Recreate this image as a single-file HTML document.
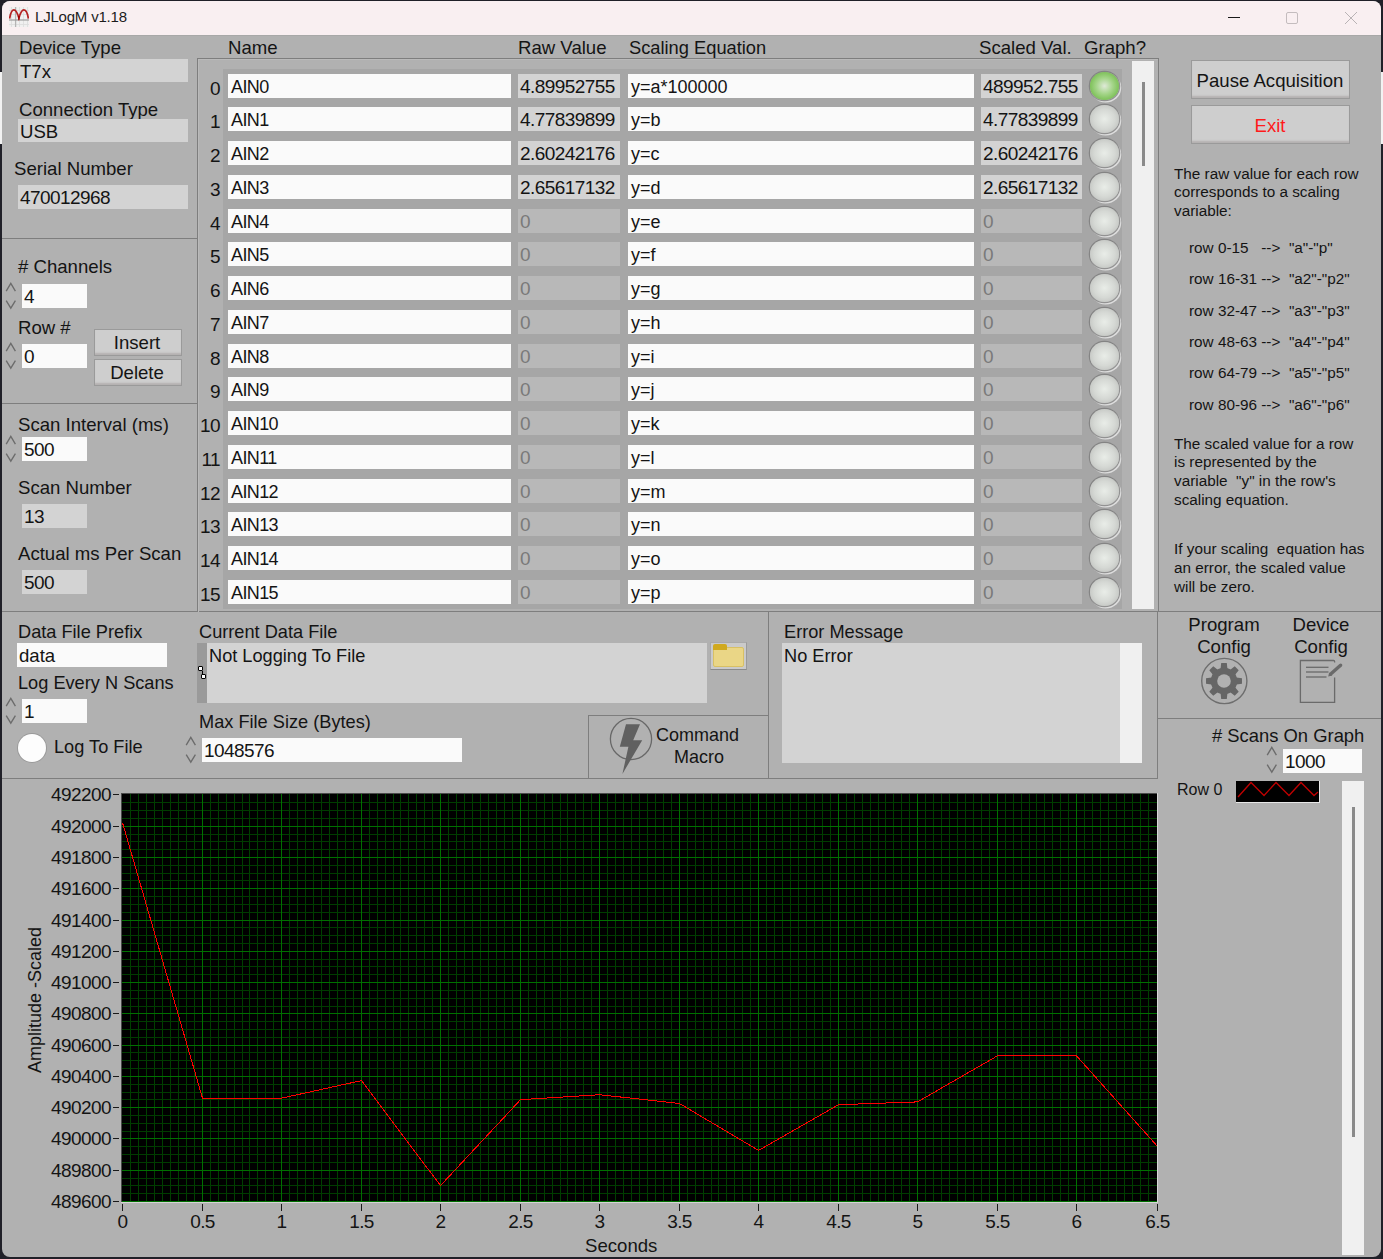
<!DOCTYPE html>
<html><head><meta charset="utf-8"><style>
html,body{margin:0;padding:0;width:1383px;height:1259px;overflow:hidden;background:#202028}
.a{position:absolute;box-sizing:content-box}
.t{position:absolute;white-space:pre;font-family:"Liberation Sans",sans-serif;color:#141414}
.btn{background:#cecece;border:1px solid #9a9a9a;box-shadow:inset 0 -3px 2px -1px #b4b0b0}
.led{border-radius:50%;box-shadow:0 0 0.5px 1.2px rgba(120,120,120,0.75), 1.2px 1.5px 0.5px 1px rgba(235,235,235,0.8)}
</style></head><body>
<div class="a" style="left:0px;top:72px;width:2px;height:72px;background:#f2f2f2;"></div>
<div class="a" style="left:1381px;top:72px;width:2px;height:72px;background:#f2f2f2;"></div>
<div class="a" style="left:2px;top:1px;width:1379px;height:1256px;background:#b1b1b1;border-radius:8px;overflow:hidden">
</div>
<div class="a" style="left:2px;top:1px;width:1379px;height:34px;background:#f9eff1;border-radius:8px 8px 0 0"></div>
<svg class="a" style="left:9px;top:7px" width="20" height="20" viewBox="0 0 20 20">
<rect x="0" y="0" width="20" height="20" fill="#f0f0f0"/>
<g stroke="#dcdcdc" stroke-width="0.8">
<line x1="2.5" y1="0" x2="2.5" y2="20"/><line x1="10.5" y1="0" x2="10.5" y2="20"/><line x1="14.5" y1="0" x2="14.5" y2="20"/><line x1="18.5" y1="0" x2="18.5" y2="20"/>
<line x1="0" y1="3.5" x2="20" y2="3.5"/><line x1="0" y1="7.5" x2="20" y2="7.5"/><line x1="0" y1="17.5" x2="20" y2="17.5"/></g>
<line x1="6.6" y1="0" x2="6.6" y2="20" stroke="#b4b4b4" stroke-width="1.3"/>
<line x1="0" y1="13" x2="20" y2="13" stroke="#9c9c9c" stroke-width="1.2"/>
<path d="M0.6,11.5 C1.5,6 3,2.8 4.9,2.8 C6.8,2.8 8.5,6 9.9,11 C11.3,6 13,2.8 14.8,2.8 C16.7,2.8 18.5,6 19.4,11.5" fill="none" stroke="#b52222" stroke-width="1.7"/>
<path d="M8.9,9 L10.9,9 L10.4,13 L9.4,13 Z" fill="#a00000"/>
</svg>
<div class="t" style="left:35px;top:9px;font-size:15px;line-height:15px;color:#1c1c1c;letter-spacing:-0.2px;">LJLogM v1.18</div>
<div class="a" style="left:1228px;top:17px;width:12px;height:1px;background:#1a1a1a;"></div>
<div class="a" style="left:1286px;top:12px;width:10px;height:10px;border:1px solid #c4bcbe;border-radius:2px"></div>
<svg class="a" style="left:1344px;top:11px" width="14" height="14" viewBox="0 0 14 14">
<line x1="1" y1="1" x2="13" y2="13" stroke="#b9b3b5" stroke-width="1"/><line x1="13" y1="1" x2="1" y2="13" stroke="#b9b3b5" stroke-width="1"/></svg>
<div class="a" style="left:2px;top:35px;width:1379px;height:1px;background:#a8a8a8;"></div>
<div class="t" style="left:19px;top:39px;font-size:18.6px;line-height:18.6px;">Device Type</div>
<div class="a" style="left:18px;top:59px;width:170px;height:23px;background:#d3d3d3;"></div>
<div class="t" style="left:20px;top:63px;font-size:18.6px;line-height:18.6px;">T7x</div>
<div class="t" style="left:19px;top:101px;font-size:18.6px;line-height:18.6px;">Connection Type</div>
<div class="a" style="left:18px;top:119px;width:170px;height:23px;background:#d3d3d3;"></div>
<div class="t" style="left:20px;top:123px;font-size:18.6px;line-height:18.6px;">USB</div>
<div class="t" style="left:14px;top:160px;font-size:18.6px;line-height:18.6px;">Serial Number</div>
<div class="a" style="left:18px;top:185px;width:170px;height:24px;background:#d3d3d3;"></div>
<div class="t" style="left:20px;top:188px;font-size:19px;line-height:19px;letter-spacing:-0.56px;">470012968</div>
<div class="a" style="left:2px;top:238px;width:195px;height:1px;background:#7e7e7e;"></div>
<div class="t" style="left:18px;top:258px;font-size:18.6px;line-height:18.6px;"># Channels</div>
<svg class="a" style="left:5px;top:282px" width="13" height="28" viewBox="0 -1 13 28"><polyline points="1.2,8.2 5.8,0.4 10.4,8.2" fill="none" stroke="#6c6c6c" stroke-width="1.35"/><polyline points="1.2,17.6 5.8,25.2 10.4,17.6" fill="none" stroke="#6c6c6c" stroke-width="1.35"/></svg>
<div class="a" style="left:22px;top:284px;width:65px;height:24px;background:#fafafa;"></div>
<div class="t" style="left:24px;top:287px;font-size:19px;line-height:19px;letter-spacing:-0.56px;">4</div>
<div class="t" style="left:18px;top:319px;font-size:18.6px;line-height:18.6px;">Row #</div>
<svg class="a" style="left:5px;top:341.5px" width="13" height="28" viewBox="0 -1 13 28"><polyline points="1.2,8.2 5.8,0.4 10.4,8.2" fill="none" stroke="#6c6c6c" stroke-width="1.35"/><polyline points="1.2,17.6 5.8,25.2 10.4,17.6" fill="none" stroke="#6c6c6c" stroke-width="1.35"/></svg>
<div class="a" style="left:22px;top:344px;width:65px;height:24px;background:#fafafa;"></div>
<div class="t" style="left:24px;top:347px;font-size:19px;line-height:19px;letter-spacing:-0.56px;">0</div>
<div class="a btn" style="left:94px;top:329px;width:86px;height:25px;"></div>
<div class="t" style="left:-63px;width:400px;text-align:center;top:334px;font-size:18.6px;line-height:18.6px;">Insert</div>
<div class="a btn" style="left:94px;top:359px;width:86px;height:25px;"></div>
<div class="t" style="left:-63px;width:400px;text-align:center;top:364px;font-size:18.6px;line-height:18.6px;">Delete</div>
<div class="a" style="left:2px;top:403px;width:195px;height:1px;background:#7e7e7e;"></div>
<div class="t" style="left:18px;top:416px;font-size:18.6px;line-height:18.6px;">Scan Interval (ms)</div>
<svg class="a" style="left:5px;top:435px" width="13" height="28" viewBox="0 -1 13 28"><polyline points="1.2,8.2 5.8,0.4 10.4,8.2" fill="none" stroke="#6c6c6c" stroke-width="1.35"/><polyline points="1.2,17.6 5.8,25.2 10.4,17.6" fill="none" stroke="#6c6c6c" stroke-width="1.35"/></svg>
<div class="a" style="left:22px;top:437px;width:65px;height:24px;background:#fafafa;"></div>
<div class="t" style="left:24px;top:440px;font-size:19px;line-height:19px;letter-spacing:-0.56px;">500</div>
<div class="t" style="left:18px;top:479px;font-size:18.6px;line-height:18.6px;">Scan Number</div>
<div class="a" style="left:22px;top:504px;width:65px;height:24px;background:#d3d3d3;"></div>
<div class="t" style="left:24px;top:507px;font-size:19px;line-height:19px;letter-spacing:-0.56px;">13</div>
<div class="t" style="left:18px;top:545px;font-size:18.6px;line-height:18.6px;">Actual ms Per Scan</div>
<div class="a" style="left:22px;top:570px;width:65px;height:24px;background:#d3d3d3;"></div>
<div class="t" style="left:24px;top:573px;font-size:19px;line-height:19px;letter-spacing:-0.56px;">500</div>
<div class="a" style="left:2px;top:611px;width:1379px;height:1px;background:#7e7e7e;"></div>
<div class="a" style="left:197px;top:58px;width:1px;height:553px;background:#7e7e7e;"></div>
<div class="t" style="left:228px;top:39px;font-size:18.6px;line-height:18.6px;">Name</div>
<div class="t" style="left:518px;top:39px;font-size:18.6px;line-height:18.6px;">Raw Value</div>
<div class="t" style="left:629px;top:39px;font-size:18.3px;line-height:18.3px;">Scaling Equation</div>
<div class="t" style="left:979px;top:39px;font-size:18.6px;line-height:18.6px;">Scaled Val.</div>
<div class="t" style="left:1084px;top:39px;font-size:18.6px;line-height:18.6px;">Graph?</div>
<div class="a" style="left:197px;top:58px;width:962px;height:1px;background:#7e7e7e;"></div>
<div class="a" style="left:1158px;top:58px;width:1px;height:554px;background:#7e7e7e;"></div>
<div class="a" style="left:198px;top:59px;width:960px;height:1px;background:#bababa;"></div>
<div class="a" style="left:198px;top:59px;width:1px;height:553px;background:#bababa;"></div>
<div class="a" style="left:223px;top:69px;width:899px;height:540px;background:#a6a6a6;"></div>
<div class="a" style="left:1132px;top:61px;width:22px;height:548px;background:#f0f0f0;"></div>
<div class="a" style="left:1142px;top:82px;width:3px;height:84px;background:#8a8a8a;"></div>
<div class="t" style="right:1163px;top:79px;font-size:19px;line-height:19px;letter-spacing:-0.4px;letter-spacing:-0.56px;">0</div>
<div class="a" style="left:228px;top:74px;width:283px;height:24px;background:#fafafa;"></div>
<div class="t" style="left:231px;top:78px;font-size:18px;line-height:18px;letter-spacing:-0.6px;">AIN0</div>
<div class="a" style="left:518px;top:74px;width:102px;height:24px;background:#d3d3d3;"></div>
<div class="t" style="left:520px;top:77px;font-size:19px;line-height:19px;letter-spacing:-0.56px;">4.89952755</div>
<div class="a" style="left:981px;top:74px;width:101px;height:24px;background:#d3d3d3;"></div>
<div class="t" style="left:983px;top:77px;font-size:19px;line-height:19px;letter-spacing:-0.56px;">489952.755</div>
<div class="a" style="left:628px;top:74px;width:346px;height:24px;background:#fafafa;"></div>
<div class="t" style="left:631px;top:78px;font-size:18px;line-height:18px;">y=a*100000</div>
<div class="a led" style="left:1089.5px;top:72.3px;width:29.5px;height:27.5px;background:radial-gradient(ellipse at 50% 50%, #dfe9d8 0%, #a5d58a 40%, #6cb843 85%, #62ad3a 100%)"></div>
<div class="t" style="right:1163px;top:112px;font-size:19px;line-height:19px;letter-spacing:-0.4px;letter-spacing:-0.56px;">1</div>
<div class="a" style="left:228px;top:107px;width:283px;height:24px;background:#fafafa;"></div>
<div class="t" style="left:231px;top:111px;font-size:18px;line-height:18px;letter-spacing:-0.6px;">AIN1</div>
<div class="a" style="left:518px;top:107px;width:102px;height:24px;background:#d3d3d3;"></div>
<div class="t" style="left:520px;top:110px;font-size:19px;line-height:19px;letter-spacing:-0.56px;">4.77839899</div>
<div class="a" style="left:981px;top:107px;width:101px;height:24px;background:#d3d3d3;"></div>
<div class="t" style="left:983px;top:110px;font-size:19px;line-height:19px;letter-spacing:-0.56px;">4.77839899</div>
<div class="a" style="left:628px;top:107px;width:346px;height:24px;background:#fafafa;"></div>
<div class="t" style="left:631px;top:111px;font-size:18px;line-height:18px;">y=b</div>
<div class="a led" style="left:1089.5px;top:105.3px;width:29.5px;height:27.5px;background:radial-gradient(ellipse at 50% 50%, #e9ede8 0%, #d5d8d4 50%, #bfc1be 85%, #aeb0ad 100%)"></div>
<div class="t" style="right:1163px;top:146px;font-size:19px;line-height:19px;letter-spacing:-0.4px;letter-spacing:-0.56px;">2</div>
<div class="a" style="left:228px;top:141px;width:283px;height:24px;background:#fafafa;"></div>
<div class="t" style="left:231px;top:145px;font-size:18px;line-height:18px;letter-spacing:-0.6px;">AIN2</div>
<div class="a" style="left:518px;top:141px;width:102px;height:24px;background:#d3d3d3;"></div>
<div class="t" style="left:520px;top:144px;font-size:19px;line-height:19px;letter-spacing:-0.56px;">2.60242176</div>
<div class="a" style="left:981px;top:141px;width:101px;height:24px;background:#d3d3d3;"></div>
<div class="t" style="left:983px;top:144px;font-size:19px;line-height:19px;letter-spacing:-0.56px;">2.60242176</div>
<div class="a" style="left:628px;top:141px;width:346px;height:24px;background:#fafafa;"></div>
<div class="t" style="left:631px;top:145px;font-size:18px;line-height:18px;">y=c</div>
<div class="a led" style="left:1089.5px;top:139.3px;width:29.5px;height:27.5px;background:radial-gradient(ellipse at 50% 50%, #e9ede8 0%, #d5d8d4 50%, #bfc1be 85%, #aeb0ad 100%)"></div>
<div class="t" style="right:1163px;top:180px;font-size:19px;line-height:19px;letter-spacing:-0.4px;letter-spacing:-0.56px;">3</div>
<div class="a" style="left:228px;top:175px;width:283px;height:24px;background:#fafafa;"></div>
<div class="t" style="left:231px;top:179px;font-size:18px;line-height:18px;letter-spacing:-0.6px;">AIN3</div>
<div class="a" style="left:518px;top:175px;width:102px;height:24px;background:#d3d3d3;"></div>
<div class="t" style="left:520px;top:178px;font-size:19px;line-height:19px;letter-spacing:-0.56px;">2.65617132</div>
<div class="a" style="left:981px;top:175px;width:101px;height:24px;background:#d3d3d3;"></div>
<div class="t" style="left:983px;top:178px;font-size:19px;line-height:19px;letter-spacing:-0.56px;">2.65617132</div>
<div class="a" style="left:628px;top:175px;width:346px;height:24px;background:#fafafa;"></div>
<div class="t" style="left:631px;top:179px;font-size:18px;line-height:18px;">y=d</div>
<div class="a led" style="left:1089.5px;top:173.3px;width:29.5px;height:27.5px;background:radial-gradient(ellipse at 50% 50%, #e9ede8 0%, #d5d8d4 50%, #bfc1be 85%, #aeb0ad 100%)"></div>
<div class="t" style="right:1163px;top:214px;font-size:19px;line-height:19px;letter-spacing:-0.4px;letter-spacing:-0.56px;">4</div>
<div class="a" style="left:228px;top:209px;width:283px;height:24px;background:#fafafa;"></div>
<div class="t" style="left:231px;top:213px;font-size:18px;line-height:18px;letter-spacing:-0.6px;">AIN4</div>
<div class="a" style="left:518px;top:209px;width:102px;height:24px;background:#b8b8b8;"></div>
<div class="t" style="left:520px;top:212px;font-size:19px;line-height:19px;color:#7a7a7a;letter-spacing:-0.56px;">0</div>
<div class="a" style="left:981px;top:209px;width:101px;height:24px;background:#b8b8b8;"></div>
<div class="t" style="left:983px;top:212px;font-size:19px;line-height:19px;color:#7a7a7a;letter-spacing:-0.56px;">0</div>
<div class="a" style="left:628px;top:209px;width:346px;height:24px;background:#fafafa;"></div>
<div class="t" style="left:631px;top:213px;font-size:18px;line-height:18px;">y=e</div>
<div class="a led" style="left:1089.5px;top:207.3px;width:29.5px;height:27.5px;background:radial-gradient(ellipse at 50% 50%, #e9ede8 0%, #d5d8d4 50%, #bfc1be 85%, #aeb0ad 100%)"></div>
<div class="t" style="right:1163px;top:247px;font-size:19px;line-height:19px;letter-spacing:-0.4px;letter-spacing:-0.56px;">5</div>
<div class="a" style="left:228px;top:242px;width:283px;height:24px;background:#fafafa;"></div>
<div class="t" style="left:231px;top:246px;font-size:18px;line-height:18px;letter-spacing:-0.6px;">AIN5</div>
<div class="a" style="left:518px;top:242px;width:102px;height:24px;background:#b8b8b8;"></div>
<div class="t" style="left:520px;top:245px;font-size:19px;line-height:19px;color:#7a7a7a;letter-spacing:-0.56px;">0</div>
<div class="a" style="left:981px;top:242px;width:101px;height:24px;background:#b8b8b8;"></div>
<div class="t" style="left:983px;top:245px;font-size:19px;line-height:19px;color:#7a7a7a;letter-spacing:-0.56px;">0</div>
<div class="a" style="left:628px;top:242px;width:346px;height:24px;background:#fafafa;"></div>
<div class="t" style="left:631px;top:246px;font-size:18px;line-height:18px;">y=f</div>
<div class="a led" style="left:1089.5px;top:240.3px;width:29.5px;height:27.5px;background:radial-gradient(ellipse at 50% 50%, #e9ede8 0%, #d5d8d4 50%, #bfc1be 85%, #aeb0ad 100%)"></div>
<div class="t" style="right:1163px;top:281px;font-size:19px;line-height:19px;letter-spacing:-0.4px;letter-spacing:-0.56px;">6</div>
<div class="a" style="left:228px;top:276px;width:283px;height:24px;background:#fafafa;"></div>
<div class="t" style="left:231px;top:280px;font-size:18px;line-height:18px;letter-spacing:-0.6px;">AIN6</div>
<div class="a" style="left:518px;top:276px;width:102px;height:24px;background:#b8b8b8;"></div>
<div class="t" style="left:520px;top:279px;font-size:19px;line-height:19px;color:#7a7a7a;letter-spacing:-0.56px;">0</div>
<div class="a" style="left:981px;top:276px;width:101px;height:24px;background:#b8b8b8;"></div>
<div class="t" style="left:983px;top:279px;font-size:19px;line-height:19px;color:#7a7a7a;letter-spacing:-0.56px;">0</div>
<div class="a" style="left:628px;top:276px;width:346px;height:24px;background:#fafafa;"></div>
<div class="t" style="left:631px;top:280px;font-size:18px;line-height:18px;">y=g</div>
<div class="a led" style="left:1089.5px;top:274.3px;width:29.5px;height:27.5px;background:radial-gradient(ellipse at 50% 50%, #e9ede8 0%, #d5d8d4 50%, #bfc1be 85%, #aeb0ad 100%)"></div>
<div class="t" style="right:1163px;top:315px;font-size:19px;line-height:19px;letter-spacing:-0.4px;letter-spacing:-0.56px;">7</div>
<div class="a" style="left:228px;top:310px;width:283px;height:24px;background:#fafafa;"></div>
<div class="t" style="left:231px;top:314px;font-size:18px;line-height:18px;letter-spacing:-0.6px;">AIN7</div>
<div class="a" style="left:518px;top:310px;width:102px;height:24px;background:#b8b8b8;"></div>
<div class="t" style="left:520px;top:313px;font-size:19px;line-height:19px;color:#7a7a7a;letter-spacing:-0.56px;">0</div>
<div class="a" style="left:981px;top:310px;width:101px;height:24px;background:#b8b8b8;"></div>
<div class="t" style="left:983px;top:313px;font-size:19px;line-height:19px;color:#7a7a7a;letter-spacing:-0.56px;">0</div>
<div class="a" style="left:628px;top:310px;width:346px;height:24px;background:#fafafa;"></div>
<div class="t" style="left:631px;top:314px;font-size:18px;line-height:18px;">y=h</div>
<div class="a led" style="left:1089.5px;top:308.3px;width:29.5px;height:27.5px;background:radial-gradient(ellipse at 50% 50%, #e9ede8 0%, #d5d8d4 50%, #bfc1be 85%, #aeb0ad 100%)"></div>
<div class="t" style="right:1163px;top:349px;font-size:19px;line-height:19px;letter-spacing:-0.4px;letter-spacing:-0.56px;">8</div>
<div class="a" style="left:228px;top:344px;width:283px;height:24px;background:#fafafa;"></div>
<div class="t" style="left:231px;top:348px;font-size:18px;line-height:18px;letter-spacing:-0.6px;">AIN8</div>
<div class="a" style="left:518px;top:344px;width:102px;height:24px;background:#b8b8b8;"></div>
<div class="t" style="left:520px;top:347px;font-size:19px;line-height:19px;color:#7a7a7a;letter-spacing:-0.56px;">0</div>
<div class="a" style="left:981px;top:344px;width:101px;height:24px;background:#b8b8b8;"></div>
<div class="t" style="left:983px;top:347px;font-size:19px;line-height:19px;color:#7a7a7a;letter-spacing:-0.56px;">0</div>
<div class="a" style="left:628px;top:344px;width:346px;height:24px;background:#fafafa;"></div>
<div class="t" style="left:631px;top:348px;font-size:18px;line-height:18px;">y=i</div>
<div class="a led" style="left:1089.5px;top:342.3px;width:29.5px;height:27.5px;background:radial-gradient(ellipse at 50% 50%, #e9ede8 0%, #d5d8d4 50%, #bfc1be 85%, #aeb0ad 100%)"></div>
<div class="t" style="right:1163px;top:382px;font-size:19px;line-height:19px;letter-spacing:-0.4px;letter-spacing:-0.56px;">9</div>
<div class="a" style="left:228px;top:377px;width:283px;height:24px;background:#fafafa;"></div>
<div class="t" style="left:231px;top:381px;font-size:18px;line-height:18px;letter-spacing:-0.6px;">AIN9</div>
<div class="a" style="left:518px;top:377px;width:102px;height:24px;background:#b8b8b8;"></div>
<div class="t" style="left:520px;top:380px;font-size:19px;line-height:19px;color:#7a7a7a;letter-spacing:-0.56px;">0</div>
<div class="a" style="left:981px;top:377px;width:101px;height:24px;background:#b8b8b8;"></div>
<div class="t" style="left:983px;top:380px;font-size:19px;line-height:19px;color:#7a7a7a;letter-spacing:-0.56px;">0</div>
<div class="a" style="left:628px;top:377px;width:346px;height:24px;background:#fafafa;"></div>
<div class="t" style="left:631px;top:381px;font-size:18px;line-height:18px;">y=j</div>
<div class="a led" style="left:1089.5px;top:375.3px;width:29.5px;height:27.5px;background:radial-gradient(ellipse at 50% 50%, #e9ede8 0%, #d5d8d4 50%, #bfc1be 85%, #aeb0ad 100%)"></div>
<div class="t" style="right:1163px;top:416px;font-size:19px;line-height:19px;letter-spacing:-0.4px;letter-spacing:-0.56px;">10</div>
<div class="a" style="left:228px;top:411px;width:283px;height:24px;background:#fafafa;"></div>
<div class="t" style="left:231px;top:415px;font-size:18px;line-height:18px;letter-spacing:-0.6px;">AIN10</div>
<div class="a" style="left:518px;top:411px;width:102px;height:24px;background:#b8b8b8;"></div>
<div class="t" style="left:520px;top:414px;font-size:19px;line-height:19px;color:#7a7a7a;letter-spacing:-0.56px;">0</div>
<div class="a" style="left:981px;top:411px;width:101px;height:24px;background:#b8b8b8;"></div>
<div class="t" style="left:983px;top:414px;font-size:19px;line-height:19px;color:#7a7a7a;letter-spacing:-0.56px;">0</div>
<div class="a" style="left:628px;top:411px;width:346px;height:24px;background:#fafafa;"></div>
<div class="t" style="left:631px;top:415px;font-size:18px;line-height:18px;">y=k</div>
<div class="a led" style="left:1089.5px;top:409.3px;width:29.5px;height:27.5px;background:radial-gradient(ellipse at 50% 50%, #e9ede8 0%, #d5d8d4 50%, #bfc1be 85%, #aeb0ad 100%)"></div>
<div class="t" style="right:1163px;top:450px;font-size:19px;line-height:19px;letter-spacing:-0.4px;letter-spacing:-0.56px;">11</div>
<div class="a" style="left:228px;top:445px;width:283px;height:24px;background:#fafafa;"></div>
<div class="t" style="left:231px;top:449px;font-size:18px;line-height:18px;letter-spacing:-0.6px;">AIN11</div>
<div class="a" style="left:518px;top:445px;width:102px;height:24px;background:#b8b8b8;"></div>
<div class="t" style="left:520px;top:448px;font-size:19px;line-height:19px;color:#7a7a7a;letter-spacing:-0.56px;">0</div>
<div class="a" style="left:981px;top:445px;width:101px;height:24px;background:#b8b8b8;"></div>
<div class="t" style="left:983px;top:448px;font-size:19px;line-height:19px;color:#7a7a7a;letter-spacing:-0.56px;">0</div>
<div class="a" style="left:628px;top:445px;width:346px;height:24px;background:#fafafa;"></div>
<div class="t" style="left:631px;top:449px;font-size:18px;line-height:18px;">y=l</div>
<div class="a led" style="left:1089.5px;top:443.3px;width:29.5px;height:27.5px;background:radial-gradient(ellipse at 50% 50%, #e9ede8 0%, #d5d8d4 50%, #bfc1be 85%, #aeb0ad 100%)"></div>
<div class="t" style="right:1163px;top:484px;font-size:19px;line-height:19px;letter-spacing:-0.4px;letter-spacing:-0.56px;">12</div>
<div class="a" style="left:228px;top:479px;width:283px;height:24px;background:#fafafa;"></div>
<div class="t" style="left:231px;top:483px;font-size:18px;line-height:18px;letter-spacing:-0.6px;">AIN12</div>
<div class="a" style="left:518px;top:479px;width:102px;height:24px;background:#b8b8b8;"></div>
<div class="t" style="left:520px;top:482px;font-size:19px;line-height:19px;color:#7a7a7a;letter-spacing:-0.56px;">0</div>
<div class="a" style="left:981px;top:479px;width:101px;height:24px;background:#b8b8b8;"></div>
<div class="t" style="left:983px;top:482px;font-size:19px;line-height:19px;color:#7a7a7a;letter-spacing:-0.56px;">0</div>
<div class="a" style="left:628px;top:479px;width:346px;height:24px;background:#fafafa;"></div>
<div class="t" style="left:631px;top:483px;font-size:18px;line-height:18px;">y=m</div>
<div class="a led" style="left:1089.5px;top:477.3px;width:29.5px;height:27.5px;background:radial-gradient(ellipse at 50% 50%, #e9ede8 0%, #d5d8d4 50%, #bfc1be 85%, #aeb0ad 100%)"></div>
<div class="t" style="right:1163px;top:517px;font-size:19px;line-height:19px;letter-spacing:-0.4px;letter-spacing:-0.56px;">13</div>
<div class="a" style="left:228px;top:512px;width:283px;height:24px;background:#fafafa;"></div>
<div class="t" style="left:231px;top:516px;font-size:18px;line-height:18px;letter-spacing:-0.6px;">AIN13</div>
<div class="a" style="left:518px;top:512px;width:102px;height:24px;background:#b8b8b8;"></div>
<div class="t" style="left:520px;top:515px;font-size:19px;line-height:19px;color:#7a7a7a;letter-spacing:-0.56px;">0</div>
<div class="a" style="left:981px;top:512px;width:101px;height:24px;background:#b8b8b8;"></div>
<div class="t" style="left:983px;top:515px;font-size:19px;line-height:19px;color:#7a7a7a;letter-spacing:-0.56px;">0</div>
<div class="a" style="left:628px;top:512px;width:346px;height:24px;background:#fafafa;"></div>
<div class="t" style="left:631px;top:516px;font-size:18px;line-height:18px;">y=n</div>
<div class="a led" style="left:1089.5px;top:510.3px;width:29.5px;height:27.5px;background:radial-gradient(ellipse at 50% 50%, #e9ede8 0%, #d5d8d4 50%, #bfc1be 85%, #aeb0ad 100%)"></div>
<div class="t" style="right:1163px;top:551px;font-size:19px;line-height:19px;letter-spacing:-0.4px;letter-spacing:-0.56px;">14</div>
<div class="a" style="left:228px;top:546px;width:283px;height:24px;background:#fafafa;"></div>
<div class="t" style="left:231px;top:550px;font-size:18px;line-height:18px;letter-spacing:-0.6px;">AIN14</div>
<div class="a" style="left:518px;top:546px;width:102px;height:24px;background:#b8b8b8;"></div>
<div class="t" style="left:520px;top:549px;font-size:19px;line-height:19px;color:#7a7a7a;letter-spacing:-0.56px;">0</div>
<div class="a" style="left:981px;top:546px;width:101px;height:24px;background:#b8b8b8;"></div>
<div class="t" style="left:983px;top:549px;font-size:19px;line-height:19px;color:#7a7a7a;letter-spacing:-0.56px;">0</div>
<div class="a" style="left:628px;top:546px;width:346px;height:24px;background:#fafafa;"></div>
<div class="t" style="left:631px;top:550px;font-size:18px;line-height:18px;">y=o</div>
<div class="a led" style="left:1089.5px;top:544.3px;width:29.5px;height:27.5px;background:radial-gradient(ellipse at 50% 50%, #e9ede8 0%, #d5d8d4 50%, #bfc1be 85%, #aeb0ad 100%)"></div>
<div class="t" style="right:1163px;top:585px;font-size:19px;line-height:19px;letter-spacing:-0.4px;letter-spacing:-0.56px;">15</div>
<div class="a" style="left:228px;top:580px;width:283px;height:24px;background:#fafafa;"></div>
<div class="t" style="left:231px;top:584px;font-size:18px;line-height:18px;letter-spacing:-0.6px;">AIN15</div>
<div class="a" style="left:518px;top:580px;width:102px;height:24px;background:#b8b8b8;"></div>
<div class="t" style="left:520px;top:583px;font-size:19px;line-height:19px;color:#7a7a7a;letter-spacing:-0.56px;">0</div>
<div class="a" style="left:981px;top:580px;width:101px;height:24px;background:#b8b8b8;"></div>
<div class="t" style="left:983px;top:583px;font-size:19px;line-height:19px;color:#7a7a7a;letter-spacing:-0.56px;">0</div>
<div class="a" style="left:628px;top:580px;width:346px;height:24px;background:#fafafa;"></div>
<div class="t" style="left:631px;top:584px;font-size:18px;line-height:18px;">y=p</div>
<div class="a led" style="left:1089.5px;top:578.3px;width:29.5px;height:27.5px;background:radial-gradient(ellipse at 50% 50%, #e9ede8 0%, #d5d8d4 50%, #bfc1be 85%, #aeb0ad 100%)"></div>
<div class="a btn" style="left:1191px;top:60px;width:157px;height:37px;"></div>
<div class="t" style="left:1070px;width:400px;text-align:center;top:72px;font-size:18.6px;line-height:18.6px;">Pause Acquisition</div>
<div class="a btn" style="left:1191px;top:105px;width:157px;height:37px;"></div>
<div class="t" style="left:1070px;width:400px;text-align:center;top:117px;font-size:18.6px;line-height:18.6px;color:#ff1a1a;">Exit</div>
<div class="t" style="left:1174px;top:166px;font-size:15.3px;line-height:15.3px;">The raw value for each row</div>
<div class="t" style="left:1174px;top:184px;font-size:15.3px;line-height:15.3px;">corresponds to a scaling</div>
<div class="t" style="left:1174px;top:203px;font-size:15.3px;line-height:15.3px;">variable:</div>
<div class="t" style="left:1189px;top:240px;font-size:15.3px;line-height:15.3px;">row 0-15 &nbsp;&nbsp;--&gt; &nbsp;"a"-"p"</div>
<div class="t" style="left:1189px;top:271px;font-size:15.3px;line-height:15.3px;">row 16-31 --&gt; &nbsp;"a2"-"p2"</div>
<div class="t" style="left:1189px;top:303px;font-size:15.3px;line-height:15.3px;">row 32-47 --&gt; &nbsp;"a3"-"p3"</div>
<div class="t" style="left:1189px;top:334px;font-size:15.3px;line-height:15.3px;">row 48-63 --&gt; &nbsp;"a4"-"p4"</div>
<div class="t" style="left:1189px;top:365px;font-size:15.3px;line-height:15.3px;">row 64-79 --&gt; &nbsp;"a5"-"p5"</div>
<div class="t" style="left:1189px;top:397px;font-size:15.3px;line-height:15.3px;">row 80-96 --&gt; &nbsp;"a6"-"p6"</div>
<div class="t" style="left:1174px;top:436px;font-size:15.3px;line-height:15.3px;">The scaled value for a row</div>
<div class="t" style="left:1174px;top:454px;font-size:15.3px;line-height:15.3px;">is represented by the</div>
<div class="t" style="left:1174px;top:473px;font-size:15.3px;line-height:15.3px;">variable &nbsp;"y" in the row's</div>
<div class="t" style="left:1174px;top:492px;font-size:15.3px;line-height:15.3px;">scaling equation.</div>
<div class="t" style="left:1174px;top:541px;font-size:15.3px;line-height:15.3px;">If your scaling &nbsp;equation has</div>
<div class="t" style="left:1174px;top:560px;font-size:15.3px;line-height:15.3px;">an error, the scaled value</div>
<div class="t" style="left:1174px;top:579px;font-size:15.3px;line-height:15.3px;">will be zero.</div>
<div class="t" style="left:18px;top:623px;font-size:18.2px;line-height:18.2px;">Data File Prefix</div>
<div class="a" style="left:17px;top:643px;width:150px;height:24px;background:#fafafa;"></div>
<div class="t" style="left:19px;top:647px;font-size:18.6px;line-height:18.6px;">data</div>
<div class="t" style="left:18px;top:674px;font-size:18.2px;line-height:18.2px;">Log Every N Scans</div>
<svg class="a" style="left:5px;top:697px" width="13" height="28" viewBox="0 -1 13 28"><polyline points="1.2,8.2 5.8,0.4 10.4,8.2" fill="none" stroke="#6c6c6c" stroke-width="1.35"/><polyline points="1.2,17.6 5.8,25.2 10.4,17.6" fill="none" stroke="#6c6c6c" stroke-width="1.35"/></svg>
<div class="a" style="left:22px;top:699px;width:65px;height:24px;background:#fafafa;"></div>
<div class="t" style="left:24px;top:702px;font-size:19px;line-height:19px;letter-spacing:-0.56px;">1</div>
<div class="a" style="left:18px;top:734px;width:28px;height:28px;border-radius:50%;background:#fdfdfd;box-shadow:0 0 0.5px 1px #9a9a9a"></div>
<div class="t" style="left:54px;top:738px;font-size:18.2px;line-height:18.2px;">Log To File</div>
<div class="t" style="left:199px;top:623px;font-size:18.2px;line-height:18.2px;">Current Data File</div>
<div class="a" style="left:197px;top:643px;width:10px;height:60px;background:#9a9a9a;"></div>
<div class="a" style="left:207px;top:643px;width:500px;height:60px;background:#d3d3d3;"></div>
<div class="t" style="left:209px;top:647px;font-size:18.2px;line-height:18.2px;">Not Logging To File</div>
<div class="a" style="left:198px;top:666px;width:3px;height:3px;border:1px solid #000;background:#fff;border-radius:1px"></div>
<div class="a" style="left:202px;top:671px;width:1px;height:3px;background:#000"></div>
<div class="a" style="left:201px;top:674px;width:3px;height:3px;border:1px solid #000;background:#fff;border-radius:1px"></div>
<div class="a" style="left:710px;top:642px;width:35px;height:26px;background:#cacaca;border:1px solid #a9a9a9;border-bottom-color:#8a8a8a;border-right-color:#9a9a9a"></div>
<div class="a" style="left:713px;top:647px;width:29px;height:18px;background:#ead686;border:1px solid #d8c064;border-radius:2px"></div>
<div class="a" style="left:713px;top:644px;width:14px;height:6px;background:#d0a91e;border-radius:2px 2px 0 0"></div>
<div class="t" style="left:199px;top:713px;font-size:18.2px;line-height:18.2px;">Max File Size (Bytes)</div>
<svg class="a" style="left:185px;top:735.5px" width="13" height="28" viewBox="0 -1 13 28"><polyline points="1.2,8.2 5.8,0.4 10.4,8.2" fill="none" stroke="#6c6c6c" stroke-width="1.35"/><polyline points="1.2,17.6 5.8,25.2 10.4,17.6" fill="none" stroke="#6c6c6c" stroke-width="1.35"/></svg>
<div class="a" style="left:202px;top:738px;width:260px;height:24px;background:#fafafa;"></div>
<div class="t" style="left:204px;top:741px;font-size:19px;line-height:19px;letter-spacing:-0.56px;">1048576</div>
<div class="a" style="left:588px;top:715px;width:180px;height:1px;background:#7e7e7e;"></div>
<div class="a" style="left:588px;top:715px;width:1px;height:63px;background:#7e7e7e;"></div>
<svg class="a" style="left:605px;top:714px" width="54" height="64" viewBox="0 0 54 64">
<circle cx="26" cy="25" r="20.6" fill="none" stroke="#686868" stroke-width="1.3"/>
<path d="M21,10.2 L35,10.2 L28.2,26.2 L37.2,26.2 L17.4,60 L23.4,32.7 L14.8,32.7 Z" fill="#606060"/></svg>
<div class="t" style="left:656px;top:726px;font-size:17.99px;line-height:17.99px;">Command</div>
<div class="t" style="left:674px;top:748px;font-size:17.99px;line-height:17.99px;">Macro</div>
<div class="a" style="left:768px;top:612px;width:1px;height:166px;background:#7e7e7e;"></div>
<div class="t" style="left:784px;top:623px;font-size:18.2px;line-height:18.2px;">Error Message</div>
<div class="a" style="left:782px;top:643px;width:338px;height:120px;background:#d3d3d3;"></div>
<div class="a" style="left:1120px;top:643px;width:22px;height:120px;background:#f0f0f0;"></div>
<div class="t" style="left:784px;top:647px;font-size:18.2px;line-height:18.2px;">No Error</div>
<div class="a" style="left:1157px;top:612px;width:1px;height:166px;background:#7e7e7e;"></div>
<div class="t" style="left:1024px;width:400px;text-align:center;top:616px;font-size:18.6px;line-height:18.6px;">Program</div>
<div class="t" style="left:1024px;width:400px;text-align:center;top:638px;font-size:18.6px;line-height:18.6px;">Config</div>
<div class="t" style="left:1121px;width:400px;text-align:center;top:616px;font-size:18.6px;line-height:18.6px;">Device</div>
<div class="t" style="left:1121px;width:400px;text-align:center;top:638px;font-size:18.6px;line-height:18.6px;">Config</div>
<svg class="a" style="left:1200px;top:657px" width="48" height="48" viewBox="-24 -24 48 48">
<circle cx="0.3" cy="0" r="22.6" fill="none" stroke="#6e6e6e" stroke-width="1.4"/>
<path d="M12.34,-3.41 L17.98,-2.81 L17.98,2.81 L12.34,3.41 L11.14,6.31 L14.70,10.73 L10.73,14.70 L6.31,11.14 L3.41,12.34 L2.81,17.98 L-2.81,17.98 L-3.41,12.34 L-6.31,11.14 L-10.73,14.70 L-14.70,10.73 L-11.14,6.31 L-12.34,3.41 L-17.98,2.81 L-17.98,-2.81 L-12.34,-3.41 L-11.14,-6.31 L-14.70,-10.73 L-10.73,-14.70 L-6.31,-11.14 L-3.41,-12.34 L-2.81,-17.98 L2.81,-17.98 L3.41,-12.34 L6.31,-11.14 L10.73,-14.70 L14.70,-10.73 L11.14,-6.31 Z" fill="#666"/>
<circle cx="0" cy="0" r="13.2" fill="#666"/>
<circle cx="0" cy="0" r="6.8" fill="#b1b1b1"/></svg>
<svg class="a" style="left:1298px;top:658px" width="48" height="48" viewBox="0 0 48 48">
<path d="M36.6,19.5 L36.6,44.4 L2.4,44.4 L2.4,2.5 L35.6,2.5 Q36.6,2.5 36.6,3.5 L36.6,4.5" fill="none" stroke="#6a6a6a" stroke-width="1.3"/>
<line x1="8" y1="9.3" x2="30.5" y2="9.3" stroke="#6a6a6a" stroke-width="1.3"/>
<line x1="8" y1="14" x2="30.5" y2="14" stroke="#6a6a6a" stroke-width="1.3"/>
<line x1="8" y1="19" x2="28.5" y2="19" stroke="#6a6a6a" stroke-width="1.3"/>
<line x1="33" y1="15.8" x2="42.6" y2="7.2" stroke="#6a6a6a" stroke-width="3.4" stroke-linecap="round"/>
<path d="M30.2,18.6 L31.2,14.4 L34.4,17.6 Z" fill="#6a6a6a"/>
</svg>
<div class="a" style="left:1158px;top:718px;width:223px;height:1px;background:#7e7e7e;"></div>
<div class="t" style="left:1212px;top:727px;font-size:18.4px;line-height:18.4px;"># Scans On Graph</div>
<svg class="a" style="left:1265.5px;top:746px" width="13" height="28" viewBox="0 -1 13 28"><polyline points="1.2,8.2 5.8,0.4 10.4,8.2" fill="none" stroke="#6c6c6c" stroke-width="1.35"/><polyline points="1.2,17.6 5.8,25.2 10.4,17.6" fill="none" stroke="#6c6c6c" stroke-width="1.35"/></svg>
<div class="a" style="left:1283px;top:749px;width:79px;height:24px;background:#fafafa;"></div>
<div class="t" style="left:1285px;top:752px;font-size:19px;line-height:19px;letter-spacing:-0.56px;">1000</div>
<div class="t" style="left:1177px;top:782px;font-size:16px;line-height:16px;">Row 0</div>
<svg class="a" style="left:1236px;top:781px" width="84" height="22" viewBox="0 0 84 22">
<rect x="0" y="0" width="84" height="22" fill="#e8e8e8"/><rect x="0" y="0" width="83" height="21" fill="#000"/>
<polyline points="2,16 15,1.5 28,14.5 40,1.5 53,14.5 65,1.5 78,14.5 82,11" fill="none" stroke="#c00000" stroke-width="1.3"/></svg>
<div class="a" style="left:1342px;top:781px;width:22px;height:474px;background:#f0f0f0;"></div>
<div class="a" style="left:1352px;top:807px;width:3px;height:330px;background:#8a8a8a;"></div>
<div class="a" style="left:2px;top:778px;width:1156px;height:1px;background:#7e7e7e;"></div>
<svg class="a" style="left:121px;top:794px" width="1039" height="410" viewBox="121 794 1039 410" shape-rendering="crispEdges"><rect x="121" y="794" width="1037" height="408" fill="#000"/><line x1="130.5" y1="794" x2="130.5" y2="1202" stroke="#004000" stroke-width="1"/><line x1="138.5" y1="794" x2="138.5" y2="1202" stroke="#004000" stroke-width="1"/><line x1="146.5" y1="794" x2="146.5" y2="1202" stroke="#004000" stroke-width="1"/><line x1="154.5" y1="794" x2="154.5" y2="1202" stroke="#004000" stroke-width="1"/><line x1="162.5" y1="794" x2="162.5" y2="1202" stroke="#004000" stroke-width="1"/><line x1="170.5" y1="794" x2="170.5" y2="1202" stroke="#004000" stroke-width="1"/><line x1="178.5" y1="794" x2="178.5" y2="1202" stroke="#004000" stroke-width="1"/><line x1="186.5" y1="794" x2="186.5" y2="1202" stroke="#004000" stroke-width="1"/><line x1="194.5" y1="794" x2="194.5" y2="1202" stroke="#004000" stroke-width="1"/><line x1="210.5" y1="794" x2="210.5" y2="1202" stroke="#004000" stroke-width="1"/><line x1="218.5" y1="794" x2="218.5" y2="1202" stroke="#004000" stroke-width="1"/><line x1="226.5" y1="794" x2="226.5" y2="1202" stroke="#004000" stroke-width="1"/><line x1="234.5" y1="794" x2="234.5" y2="1202" stroke="#004000" stroke-width="1"/><line x1="242.5" y1="794" x2="242.5" y2="1202" stroke="#004000" stroke-width="1"/><line x1="249.5" y1="794" x2="249.5" y2="1202" stroke="#004000" stroke-width="1"/><line x1="257.5" y1="794" x2="257.5" y2="1202" stroke="#004000" stroke-width="1"/><line x1="265.5" y1="794" x2="265.5" y2="1202" stroke="#004000" stroke-width="1"/><line x1="273.5" y1="794" x2="273.5" y2="1202" stroke="#004000" stroke-width="1"/><line x1="289.5" y1="794" x2="289.5" y2="1202" stroke="#004000" stroke-width="1"/><line x1="297.5" y1="794" x2="297.5" y2="1202" stroke="#004000" stroke-width="1"/><line x1="305.5" y1="794" x2="305.5" y2="1202" stroke="#004000" stroke-width="1"/><line x1="313.5" y1="794" x2="313.5" y2="1202" stroke="#004000" stroke-width="1"/><line x1="321.5" y1="794" x2="321.5" y2="1202" stroke="#004000" stroke-width="1"/><line x1="329.5" y1="794" x2="329.5" y2="1202" stroke="#004000" stroke-width="1"/><line x1="337.5" y1="794" x2="337.5" y2="1202" stroke="#004000" stroke-width="1"/><line x1="345.5" y1="794" x2="345.5" y2="1202" stroke="#004000" stroke-width="1"/><line x1="353.5" y1="794" x2="353.5" y2="1202" stroke="#004000" stroke-width="1"/><line x1="369.5" y1="794" x2="369.5" y2="1202" stroke="#004000" stroke-width="1"/><line x1="377.5" y1="794" x2="377.5" y2="1202" stroke="#004000" stroke-width="1"/><line x1="385.5" y1="794" x2="385.5" y2="1202" stroke="#004000" stroke-width="1"/><line x1="393.5" y1="794" x2="393.5" y2="1202" stroke="#004000" stroke-width="1"/><line x1="400.5" y1="794" x2="400.5" y2="1202" stroke="#004000" stroke-width="1"/><line x1="408.5" y1="794" x2="408.5" y2="1202" stroke="#004000" stroke-width="1"/><line x1="416.5" y1="794" x2="416.5" y2="1202" stroke="#004000" stroke-width="1"/><line x1="424.5" y1="794" x2="424.5" y2="1202" stroke="#004000" stroke-width="1"/><line x1="432.5" y1="794" x2="432.5" y2="1202" stroke="#004000" stroke-width="1"/><line x1="448.5" y1="794" x2="448.5" y2="1202" stroke="#004000" stroke-width="1"/><line x1="456.5" y1="794" x2="456.5" y2="1202" stroke="#004000" stroke-width="1"/><line x1="464.5" y1="794" x2="464.5" y2="1202" stroke="#004000" stroke-width="1"/><line x1="472.5" y1="794" x2="472.5" y2="1202" stroke="#004000" stroke-width="1"/><line x1="480.5" y1="794" x2="480.5" y2="1202" stroke="#004000" stroke-width="1"/><line x1="488.5" y1="794" x2="488.5" y2="1202" stroke="#004000" stroke-width="1"/><line x1="496.5" y1="794" x2="496.5" y2="1202" stroke="#004000" stroke-width="1"/><line x1="504.5" y1="794" x2="504.5" y2="1202" stroke="#004000" stroke-width="1"/><line x1="512.5" y1="794" x2="512.5" y2="1202" stroke="#004000" stroke-width="1"/><line x1="528.5" y1="794" x2="528.5" y2="1202" stroke="#004000" stroke-width="1"/><line x1="536.5" y1="794" x2="536.5" y2="1202" stroke="#004000" stroke-width="1"/><line x1="544.5" y1="794" x2="544.5" y2="1202" stroke="#004000" stroke-width="1"/><line x1="552.5" y1="794" x2="552.5" y2="1202" stroke="#004000" stroke-width="1"/><line x1="560.5" y1="794" x2="560.5" y2="1202" stroke="#004000" stroke-width="1"/><line x1="567.5" y1="794" x2="567.5" y2="1202" stroke="#004000" stroke-width="1"/><line x1="575.5" y1="794" x2="575.5" y2="1202" stroke="#004000" stroke-width="1"/><line x1="583.5" y1="794" x2="583.5" y2="1202" stroke="#004000" stroke-width="1"/><line x1="591.5" y1="794" x2="591.5" y2="1202" stroke="#004000" stroke-width="1"/><line x1="607.5" y1="794" x2="607.5" y2="1202" stroke="#004000" stroke-width="1"/><line x1="615.5" y1="794" x2="615.5" y2="1202" stroke="#004000" stroke-width="1"/><line x1="623.5" y1="794" x2="623.5" y2="1202" stroke="#004000" stroke-width="1"/><line x1="631.5" y1="794" x2="631.5" y2="1202" stroke="#004000" stroke-width="1"/><line x1="639.5" y1="794" x2="639.5" y2="1202" stroke="#004000" stroke-width="1"/><line x1="647.5" y1="794" x2="647.5" y2="1202" stroke="#004000" stroke-width="1"/><line x1="655.5" y1="794" x2="655.5" y2="1202" stroke="#004000" stroke-width="1"/><line x1="663.5" y1="794" x2="663.5" y2="1202" stroke="#004000" stroke-width="1"/><line x1="671.5" y1="794" x2="671.5" y2="1202" stroke="#004000" stroke-width="1"/><line x1="687.5" y1="794" x2="687.5" y2="1202" stroke="#004000" stroke-width="1"/><line x1="695.5" y1="794" x2="695.5" y2="1202" stroke="#004000" stroke-width="1"/><line x1="703.5" y1="794" x2="703.5" y2="1202" stroke="#004000" stroke-width="1"/><line x1="711.5" y1="794" x2="711.5" y2="1202" stroke="#004000" stroke-width="1"/><line x1="718.5" y1="794" x2="718.5" y2="1202" stroke="#004000" stroke-width="1"/><line x1="726.5" y1="794" x2="726.5" y2="1202" stroke="#004000" stroke-width="1"/><line x1="734.5" y1="794" x2="734.5" y2="1202" stroke="#004000" stroke-width="1"/><line x1="742.5" y1="794" x2="742.5" y2="1202" stroke="#004000" stroke-width="1"/><line x1="750.5" y1="794" x2="750.5" y2="1202" stroke="#004000" stroke-width="1"/><line x1="766.5" y1="794" x2="766.5" y2="1202" stroke="#004000" stroke-width="1"/><line x1="774.5" y1="794" x2="774.5" y2="1202" stroke="#004000" stroke-width="1"/><line x1="782.5" y1="794" x2="782.5" y2="1202" stroke="#004000" stroke-width="1"/><line x1="790.5" y1="794" x2="790.5" y2="1202" stroke="#004000" stroke-width="1"/><line x1="798.5" y1="794" x2="798.5" y2="1202" stroke="#004000" stroke-width="1"/><line x1="806.5" y1="794" x2="806.5" y2="1202" stroke="#004000" stroke-width="1"/><line x1="814.5" y1="794" x2="814.5" y2="1202" stroke="#004000" stroke-width="1"/><line x1="822.5" y1="794" x2="822.5" y2="1202" stroke="#004000" stroke-width="1"/><line x1="830.5" y1="794" x2="830.5" y2="1202" stroke="#004000" stroke-width="1"/><line x1="846.5" y1="794" x2="846.5" y2="1202" stroke="#004000" stroke-width="1"/><line x1="854.5" y1="794" x2="854.5" y2="1202" stroke="#004000" stroke-width="1"/><line x1="862.5" y1="794" x2="862.5" y2="1202" stroke="#004000" stroke-width="1"/><line x1="870.5" y1="794" x2="870.5" y2="1202" stroke="#004000" stroke-width="1"/><line x1="878.5" y1="794" x2="878.5" y2="1202" stroke="#004000" stroke-width="1"/><line x1="885.5" y1="794" x2="885.5" y2="1202" stroke="#004000" stroke-width="1"/><line x1="893.5" y1="794" x2="893.5" y2="1202" stroke="#004000" stroke-width="1"/><line x1="901.5" y1="794" x2="901.5" y2="1202" stroke="#004000" stroke-width="1"/><line x1="909.5" y1="794" x2="909.5" y2="1202" stroke="#004000" stroke-width="1"/><line x1="925.5" y1="794" x2="925.5" y2="1202" stroke="#004000" stroke-width="1"/><line x1="933.5" y1="794" x2="933.5" y2="1202" stroke="#004000" stroke-width="1"/><line x1="941.5" y1="794" x2="941.5" y2="1202" stroke="#004000" stroke-width="1"/><line x1="949.5" y1="794" x2="949.5" y2="1202" stroke="#004000" stroke-width="1"/><line x1="957.5" y1="794" x2="957.5" y2="1202" stroke="#004000" stroke-width="1"/><line x1="965.5" y1="794" x2="965.5" y2="1202" stroke="#004000" stroke-width="1"/><line x1="973.5" y1="794" x2="973.5" y2="1202" stroke="#004000" stroke-width="1"/><line x1="981.5" y1="794" x2="981.5" y2="1202" stroke="#004000" stroke-width="1"/><line x1="989.5" y1="794" x2="989.5" y2="1202" stroke="#004000" stroke-width="1"/><line x1="1005.5" y1="794" x2="1005.5" y2="1202" stroke="#004000" stroke-width="1"/><line x1="1013.5" y1="794" x2="1013.5" y2="1202" stroke="#004000" stroke-width="1"/><line x1="1021.5" y1="794" x2="1021.5" y2="1202" stroke="#004000" stroke-width="1"/><line x1="1029.5" y1="794" x2="1029.5" y2="1202" stroke="#004000" stroke-width="1"/><line x1="1036.5" y1="794" x2="1036.5" y2="1202" stroke="#004000" stroke-width="1"/><line x1="1044.5" y1="794" x2="1044.5" y2="1202" stroke="#004000" stroke-width="1"/><line x1="1052.5" y1="794" x2="1052.5" y2="1202" stroke="#004000" stroke-width="1"/><line x1="1060.5" y1="794" x2="1060.5" y2="1202" stroke="#004000" stroke-width="1"/><line x1="1068.5" y1="794" x2="1068.5" y2="1202" stroke="#004000" stroke-width="1"/><line x1="1084.5" y1="794" x2="1084.5" y2="1202" stroke="#004000" stroke-width="1"/><line x1="1092.5" y1="794" x2="1092.5" y2="1202" stroke="#004000" stroke-width="1"/><line x1="1100.5" y1="794" x2="1100.5" y2="1202" stroke="#004000" stroke-width="1"/><line x1="1108.5" y1="794" x2="1108.5" y2="1202" stroke="#004000" stroke-width="1"/><line x1="1116.5" y1="794" x2="1116.5" y2="1202" stroke="#004000" stroke-width="1"/><line x1="1124.5" y1="794" x2="1124.5" y2="1202" stroke="#004000" stroke-width="1"/><line x1="1132.5" y1="794" x2="1132.5" y2="1202" stroke="#004000" stroke-width="1"/><line x1="1140.5" y1="794" x2="1140.5" y2="1202" stroke="#004000" stroke-width="1"/><line x1="1148.5" y1="794" x2="1148.5" y2="1202" stroke="#004000" stroke-width="1"/><line x1="121" y1="802.5" x2="1158" y2="802.5" stroke="#003c00" stroke-width="1"/><line x1="121" y1="810.5" x2="1158" y2="810.5" stroke="#003c00" stroke-width="1"/><line x1="121" y1="818.5" x2="1158" y2="818.5" stroke="#003c00" stroke-width="1"/><line x1="121" y1="834.5" x2="1158" y2="834.5" stroke="#003c00" stroke-width="1"/><line x1="121" y1="841.5" x2="1158" y2="841.5" stroke="#003c00" stroke-width="1"/><line x1="121" y1="849.5" x2="1158" y2="849.5" stroke="#003c00" stroke-width="1"/><line x1="121" y1="865.5" x2="1158" y2="865.5" stroke="#003c00" stroke-width="1"/><line x1="121" y1="873.5" x2="1158" y2="873.5" stroke="#003c00" stroke-width="1"/><line x1="121" y1="880.5" x2="1158" y2="880.5" stroke="#003c00" stroke-width="1"/><line x1="121" y1="896.5" x2="1158" y2="896.5" stroke="#003c00" stroke-width="1"/><line x1="121" y1="904.5" x2="1158" y2="904.5" stroke="#003c00" stroke-width="1"/><line x1="121" y1="912.5" x2="1158" y2="912.5" stroke="#003c00" stroke-width="1"/><line x1="121" y1="927.5" x2="1158" y2="927.5" stroke="#003c00" stroke-width="1"/><line x1="121" y1="935.5" x2="1158" y2="935.5" stroke="#003c00" stroke-width="1"/><line x1="121" y1="943.5" x2="1158" y2="943.5" stroke="#003c00" stroke-width="1"/><line x1="121" y1="959.5" x2="1158" y2="959.5" stroke="#003c00" stroke-width="1"/><line x1="121" y1="966.5" x2="1158" y2="966.5" stroke="#003c00" stroke-width="1"/><line x1="121" y1="974.5" x2="1158" y2="974.5" stroke="#003c00" stroke-width="1"/><line x1="121" y1="990.5" x2="1158" y2="990.5" stroke="#003c00" stroke-width="1"/><line x1="121" y1="998.5" x2="1158" y2="998.5" stroke="#003c00" stroke-width="1"/><line x1="121" y1="1006.5" x2="1158" y2="1006.5" stroke="#003c00" stroke-width="1"/><line x1="121" y1="1021.5" x2="1158" y2="1021.5" stroke="#003c00" stroke-width="1"/><line x1="121" y1="1029.5" x2="1158" y2="1029.5" stroke="#003c00" stroke-width="1"/><line x1="121" y1="1037.5" x2="1158" y2="1037.5" stroke="#003c00" stroke-width="1"/><line x1="121" y1="1052.5" x2="1158" y2="1052.5" stroke="#003c00" stroke-width="1"/><line x1="121" y1="1060.5" x2="1158" y2="1060.5" stroke="#003c00" stroke-width="1"/><line x1="121" y1="1068.5" x2="1158" y2="1068.5" stroke="#003c00" stroke-width="1"/><line x1="121" y1="1084.5" x2="1158" y2="1084.5" stroke="#003c00" stroke-width="1"/><line x1="121" y1="1092.5" x2="1158" y2="1092.5" stroke="#003c00" stroke-width="1"/><line x1="121" y1="1099.5" x2="1158" y2="1099.5" stroke="#003c00" stroke-width="1"/><line x1="121" y1="1115.5" x2="1158" y2="1115.5" stroke="#003c00" stroke-width="1"/><line x1="121" y1="1123.5" x2="1158" y2="1123.5" stroke="#003c00" stroke-width="1"/><line x1="121" y1="1131.5" x2="1158" y2="1131.5" stroke="#003c00" stroke-width="1"/><line x1="121" y1="1146.5" x2="1158" y2="1146.5" stroke="#003c00" stroke-width="1"/><line x1="121" y1="1154.5" x2="1158" y2="1154.5" stroke="#003c00" stroke-width="1"/><line x1="121" y1="1162.5" x2="1158" y2="1162.5" stroke="#003c00" stroke-width="1"/><line x1="121" y1="1178.5" x2="1158" y2="1178.5" stroke="#003c00" stroke-width="1"/><line x1="121" y1="1185.5" x2="1158" y2="1185.5" stroke="#003c00" stroke-width="1"/><line x1="121" y1="1193.5" x2="1158" y2="1193.5" stroke="#003c00" stroke-width="1"/><line x1="202.5" y1="794" x2="202.5" y2="1202" stroke="#007000" stroke-width="1"/><line x1="281.5" y1="794" x2="281.5" y2="1202" stroke="#007000" stroke-width="1"/><line x1="361.5" y1="794" x2="361.5" y2="1202" stroke="#007000" stroke-width="1"/><line x1="440.5" y1="794" x2="440.5" y2="1202" stroke="#007000" stroke-width="1"/><line x1="520.5" y1="794" x2="520.5" y2="1202" stroke="#007000" stroke-width="1"/><line x1="599.5" y1="794" x2="599.5" y2="1202" stroke="#007000" stroke-width="1"/><line x1="679.5" y1="794" x2="679.5" y2="1202" stroke="#007000" stroke-width="1"/><line x1="758.5" y1="794" x2="758.5" y2="1202" stroke="#007000" stroke-width="1"/><line x1="838.5" y1="794" x2="838.5" y2="1202" stroke="#007000" stroke-width="1"/><line x1="917.5" y1="794" x2="917.5" y2="1202" stroke="#007000" stroke-width="1"/><line x1="997.5" y1="794" x2="997.5" y2="1202" stroke="#007000" stroke-width="1"/><line x1="1076.5" y1="794" x2="1076.5" y2="1202" stroke="#007000" stroke-width="1"/><line x1="121" y1="826.5" x2="1158" y2="826.5" stroke="#007000" stroke-width="1"/><line x1="121" y1="857.5" x2="1158" y2="857.5" stroke="#007000" stroke-width="1"/><line x1="121" y1="888.5" x2="1158" y2="888.5" stroke="#007000" stroke-width="1"/><line x1="121" y1="920.5" x2="1158" y2="920.5" stroke="#007000" stroke-width="1"/><line x1="121" y1="951.5" x2="1158" y2="951.5" stroke="#007000" stroke-width="1"/><line x1="121" y1="982.5" x2="1158" y2="982.5" stroke="#007000" stroke-width="1"/><line x1="121" y1="1013.5" x2="1158" y2="1013.5" stroke="#007000" stroke-width="1"/><line x1="121" y1="1045.5" x2="1158" y2="1045.5" stroke="#007000" stroke-width="1"/><line x1="121" y1="1076.5" x2="1158" y2="1076.5" stroke="#007000" stroke-width="1"/><line x1="121" y1="1107.5" x2="1158" y2="1107.5" stroke="#007000" stroke-width="1"/><line x1="121" y1="1138.5" x2="1158" y2="1138.5" stroke="#007000" stroke-width="1"/><line x1="121" y1="1170.5" x2="1158" y2="1170.5" stroke="#007000" stroke-width="1"/><line x1="121" y1="1201.5" x2="1158" y2="1201.5" stroke="#007000" stroke-width="1"/></svg>
<svg class="a" style="left:121px;top:794px" width="1040" height="410" viewBox="121 794 1040 410"><polyline points="122.5,822.7 202.5,1098.2 281.5,1098.2 361.5,1080.6 440.5,1185.6 520.5,1099.7 599.5,1094.7 679.5,1103.5 758.5,1150.4 838.5,1104.7 917.5,1101.9 997.5,1055.8 1076.5,1055.8 1157.5,1146.4" fill="none" stroke="#ff0000" stroke-width="1" shape-rendering="crispEdges"/></svg>
<div class="a" style="left:1157px;top:793px;width:1px;height:410px;background:#d6d6d6;"></div>
<div class="a" style="left:121px;top:1202px;width:1037px;height:1px;background:#d6d6d6;"></div>
<div class="a" style="left:121px;top:793px;width:1036px;height:1px;background:#4a4a4a;"></div>
<div class="a" style="left:121px;top:793px;width:1px;height:409px;background:#4a4a4a;"></div>
<div class="a" style="left:113px;top:794px;width:6px;height:1px;background:#1a1a1a;"></div>
<div class="t" style="right:1272px;top:785px;font-size:19px;line-height:19px;letter-spacing:-0.56px;">492200</div>
<div class="a" style="left:113px;top:826px;width:6px;height:1px;background:#1a1a1a;"></div>
<div class="t" style="right:1272px;top:817px;font-size:19px;line-height:19px;letter-spacing:-0.56px;">492000</div>
<div class="a" style="left:113px;top:857px;width:6px;height:1px;background:#1a1a1a;"></div>
<div class="t" style="right:1272px;top:848px;font-size:19px;line-height:19px;letter-spacing:-0.56px;">491800</div>
<div class="a" style="left:113px;top:888px;width:6px;height:1px;background:#1a1a1a;"></div>
<div class="t" style="right:1272px;top:879px;font-size:19px;line-height:19px;letter-spacing:-0.56px;">491600</div>
<div class="a" style="left:113px;top:920px;width:6px;height:1px;background:#1a1a1a;"></div>
<div class="t" style="right:1272px;top:911px;font-size:19px;line-height:19px;letter-spacing:-0.56px;">491400</div>
<div class="a" style="left:113px;top:951px;width:6px;height:1px;background:#1a1a1a;"></div>
<div class="t" style="right:1272px;top:942px;font-size:19px;line-height:19px;letter-spacing:-0.56px;">491200</div>
<div class="a" style="left:113px;top:982px;width:6px;height:1px;background:#1a1a1a;"></div>
<div class="t" style="right:1272px;top:973px;font-size:19px;line-height:19px;letter-spacing:-0.56px;">491000</div>
<div class="a" style="left:113px;top:1013px;width:6px;height:1px;background:#1a1a1a;"></div>
<div class="t" style="right:1272px;top:1004px;font-size:19px;line-height:19px;letter-spacing:-0.56px;">490800</div>
<div class="a" style="left:113px;top:1045px;width:6px;height:1px;background:#1a1a1a;"></div>
<div class="t" style="right:1272px;top:1036px;font-size:19px;line-height:19px;letter-spacing:-0.56px;">490600</div>
<div class="a" style="left:113px;top:1076px;width:6px;height:1px;background:#1a1a1a;"></div>
<div class="t" style="right:1272px;top:1067px;font-size:19px;line-height:19px;letter-spacing:-0.56px;">490400</div>
<div class="a" style="left:113px;top:1107px;width:6px;height:1px;background:#1a1a1a;"></div>
<div class="t" style="right:1272px;top:1098px;font-size:19px;line-height:19px;letter-spacing:-0.56px;">490200</div>
<div class="a" style="left:113px;top:1138px;width:6px;height:1px;background:#1a1a1a;"></div>
<div class="t" style="right:1272px;top:1129px;font-size:19px;line-height:19px;letter-spacing:-0.56px;">490000</div>
<div class="a" style="left:113px;top:1170px;width:6px;height:1px;background:#1a1a1a;"></div>
<div class="t" style="right:1272px;top:1161px;font-size:19px;line-height:19px;letter-spacing:-0.56px;">489800</div>
<div class="a" style="left:113px;top:1201px;width:6px;height:1px;background:#1a1a1a;"></div>
<div class="t" style="right:1272px;top:1192px;font-size:19px;line-height:19px;letter-spacing:-0.56px;">489600</div>
<div class="a" style="left:122px;top:1204px;width:1px;height:7px;background:#1a1a1a;"></div>
<div class="t" style="left:-77.5px;width:400px;text-align:center;top:1212px;font-size:19px;line-height:19px;letter-spacing:-0.56px;">0</div>
<div class="a" style="left:202px;top:1204px;width:1px;height:7px;background:#1a1a1a;"></div>
<div class="t" style="left:2.5px;width:400px;text-align:center;top:1212px;font-size:19px;line-height:19px;letter-spacing:-0.56px;">0.5</div>
<div class="a" style="left:281px;top:1204px;width:1px;height:7px;background:#1a1a1a;"></div>
<div class="t" style="left:81.5px;width:400px;text-align:center;top:1212px;font-size:19px;line-height:19px;letter-spacing:-0.56px;">1</div>
<div class="a" style="left:361px;top:1204px;width:1px;height:7px;background:#1a1a1a;"></div>
<div class="t" style="left:161.5px;width:400px;text-align:center;top:1212px;font-size:19px;line-height:19px;letter-spacing:-0.56px;">1.5</div>
<div class="a" style="left:440px;top:1204px;width:1px;height:7px;background:#1a1a1a;"></div>
<div class="t" style="left:240.5px;width:400px;text-align:center;top:1212px;font-size:19px;line-height:19px;letter-spacing:-0.56px;">2</div>
<div class="a" style="left:520px;top:1204px;width:1px;height:7px;background:#1a1a1a;"></div>
<div class="t" style="left:320.5px;width:400px;text-align:center;top:1212px;font-size:19px;line-height:19px;letter-spacing:-0.56px;">2.5</div>
<div class="a" style="left:599px;top:1204px;width:1px;height:7px;background:#1a1a1a;"></div>
<div class="t" style="left:399.5px;width:400px;text-align:center;top:1212px;font-size:19px;line-height:19px;letter-spacing:-0.56px;">3</div>
<div class="a" style="left:679px;top:1204px;width:1px;height:7px;background:#1a1a1a;"></div>
<div class="t" style="left:479.5px;width:400px;text-align:center;top:1212px;font-size:19px;line-height:19px;letter-spacing:-0.56px;">3.5</div>
<div class="a" style="left:758px;top:1204px;width:1px;height:7px;background:#1a1a1a;"></div>
<div class="t" style="left:558.5px;width:400px;text-align:center;top:1212px;font-size:19px;line-height:19px;letter-spacing:-0.56px;">4</div>
<div class="a" style="left:838px;top:1204px;width:1px;height:7px;background:#1a1a1a;"></div>
<div class="t" style="left:638.5px;width:400px;text-align:center;top:1212px;font-size:19px;line-height:19px;letter-spacing:-0.56px;">4.5</div>
<div class="a" style="left:917px;top:1204px;width:1px;height:7px;background:#1a1a1a;"></div>
<div class="t" style="left:717.5px;width:400px;text-align:center;top:1212px;font-size:19px;line-height:19px;letter-spacing:-0.56px;">5</div>
<div class="a" style="left:997px;top:1204px;width:1px;height:7px;background:#1a1a1a;"></div>
<div class="t" style="left:797.5px;width:400px;text-align:center;top:1212px;font-size:19px;line-height:19px;letter-spacing:-0.56px;">5.5</div>
<div class="a" style="left:1076px;top:1204px;width:1px;height:7px;background:#1a1a1a;"></div>
<div class="t" style="left:876.5px;width:400px;text-align:center;top:1212px;font-size:19px;line-height:19px;letter-spacing:-0.56px;">6</div>
<div class="a" style="left:1157px;top:1204px;width:1px;height:7px;background:#1a1a1a;"></div>
<div class="t" style="left:957.5px;width:400px;text-align:center;top:1212px;font-size:19px;line-height:19px;letter-spacing:-0.56px;">6.5</div>
<div class="t" style="left:585px;top:1237px;font-size:18.6px;line-height:18.6px;">Seconds</div>
<div class="t" style="left:35px;top:1000px;font-size:18px;line-height:18px;transform:translate(-50%,-50%) rotate(-90deg);white-space:nowrap">Amplitude -Scaled</div>
</body></html>
